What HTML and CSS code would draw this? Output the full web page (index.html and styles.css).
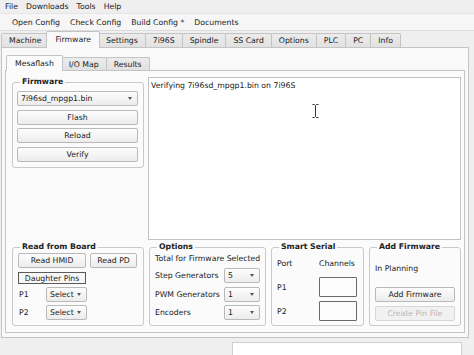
FILE: index.html
```html
<!DOCTYPE html>
<html>
<head>
    <meta charset="utf-8">
    <title>Mesa Configuration Tool</title>
    <link rel="stylesheet" href="styles.css">
</head>
<body>

<div class="menubar">
    <span>File</span><span>Downloads</span><span>Tools</span><span>Help</span>
</div>

<div class="toolbar">
    <span>Open Config</span><span>Check Config</span><span>Build Config *</span><span>Documents</span>
</div>

<div class="tabbar">
    <span class="tab">Machine</span>
    <span class="tab active">Firmware</span>
    <span class="tab">Settings</span>
    <span class="tab">7i96S</span>
    <span class="tab">Spindle</span>
    <span class="tab">SS Card</span>
    <span class="tab">Options</span>
    <span class="tab">PLC</span>
    <span class="tab">PC</span>
    <span class="tab">Info</span>
</div>

<div class="pane">
    <div class="subtabs">
        <span class="tab active">Mesaflash</span>
        <span class="tab">I/O Map</span>
        <span class="tab">Results</span>
    </div>

    <div class="subpane">
        <div class="top-row">
            <fieldset class="group fw-group">
                <legend>Firmware</legend>
                <div class="group-body">
                    <div class="combo">7i96sd_mpgp1.bin</div>
                    <button class="btn">Flash</button>
                    <button class="btn">Reload</button>
                    <button class="btn">Verify</button>
                </div>
            </fieldset>
            <div class="output">
                Verifying 7i96sd_mpgp1.bin on 7i96S
                <svg class="ibeam" width="7" height="14" viewBox="0 0 7 14">
                    <path d="M0.5 0.5h2l1 1l1-1h2M3.5 1.5v11M0.5 13.5h2l1-1l1 1h2" fill="none" stroke="#333" stroke-width="1"/>
                </svg>
            </div>
        </div>

        <div class="bottom-row">
            <fieldset class="group board-group">
                <legend>Read from Board</legend>
                <div class="board-body">
                    <div class="btn-row">
                        <button class="btn hmid">Read HMID</button>
                        <button class="btn pd">Read PD</button>
                    </div>
                    <div class="pins-btn">Daughter Pins</div>
                    <div class="port-row"><span class="port-label">P1</span><div class="combo small">Select</div></div>
                    <div class="port-row"><span class="port-label">P2</span><div class="combo small">Select</div></div>
                </div>
            </fieldset>

            <fieldset class="group options-group">
                <legend>Options</legend>
                <div class="options-body">
                    <div class="total">Total for Firmware Selected</div>
                    <div class="opt-row"><span>Step Generators</span><div class="combo num">5</div></div>
                    <div class="opt-row"><span>PWM Generators</span><div class="combo num">1</div></div>
                    <div class="opt-row"><span>Encoders</span><div class="combo num">1</div></div>
                </div>
            </fieldset>

            <fieldset class="group serial-group">
                <legend>Smart Serial</legend>
                <div class="serial-head"><span class="serial-label">Port</span><span>Channels</span></div>
                <div class="serial-row"><span class="serial-label">P1</span><div class="channel-box"></div></div>
                <div class="serial-row"><span class="serial-label">P2</span><div class="channel-box"></div></div>
            </fieldset>

            <fieldset class="group add-group">
                <legend>Add Firmware</legend>
                <div class="add-body">
                    <div class="planning">In Planning</div>
                    <button class="btn">Add Firmware</button>
                    <button class="btn disabled">Create Pin File</button>
                </div>
            </fieldset>
        </div>
    </div>
</div>

<div class="statusbar">
    <div class="status-box"></div>
</div>

</body>
</html>
```

FILE: styles.css
```css
body {
    margin: 0;
    width: 474px;
    height: 355px;
    overflow: hidden;
    background-color: #efefef;
    font-family: "DejaVu Sans", sans-serif;
    font-size: 7.75px;
    color: #222;
    display: flex;
    flex-direction: column;
}

.menubar {
    height: 13px;
    display: flex;
    align-items: center;
    padding-left: 1px;
}

.menubar span {
    padding: 0 4px;
}

.toolbar {
    height: 16px;
    display: flex;
    align-items: center;
    padding-left: 7px;
    background-color: #f6f6f6;
    border-top: 1px solid #e6e6e6;
    border-bottom: 1px solid #dcdcdc;
}

.toolbar span {
    padding: 0 5px;
}

/* tab bars */
.tabbar,
.subtabs {
    display: flex;
    align-items: flex-end;
    position: relative;
    z-index: 1;
}

.tabbar {
    height: 16px;
    margin: 0 5px 0 1px;
}

.subtabs {
    height: 15px;
    padding-left: 3px;
}

.tab {
    height: 14px;
    box-sizing: border-box;
    padding: 0 7px;
    margin-right: -1px;
    display: flex;
    align-items: center;
    border: 1px solid #c4c4c4;
    border-bottom: none;
    border-radius: 2px 2px 0 0;
    background: linear-gradient(#ececec, #e1e1e1);
    white-space: nowrap;
}

.subtabs .tab {
    height: 13px;
}

.tab.active {
    height: 17px;
    margin: 0 -2px -1px;
    padding: 0 8px 1px;
    background: #f9f9f9;
    position: relative;
    z-index: 2;
}

.subtabs .tab.active {
    height: 16px;
    background: #fbfbfb;
}

.pane {
    flex: 1;
    margin: 0 5px 0 1px;
    border: 1px solid #c4c4c4;
    background-color: #f9f9f9;
    padding: 7px 3px 4px 3px;
    display: flex;
    flex-direction: column;
    min-height: 0;
}

.subpane {
    flex: 1;
    border: 1px solid #c4c4c4;
    background-color: #fbfbfb;
    padding: 6px 3px 6px 6px;
    display: flex;
    flex-direction: column;
    gap: 2px;
}

.top-row {
    display: flex;
    gap: 4px;
    height: 163px;
    align-items: flex-start;
}

.output {
    flex: 1;
    height: 163px;
    box-sizing: border-box;
    background-color: #fff;
    border: 1px solid #c2c2c2;
    padding: 3px 2px;
    line-height: 10px;
    position: relative;
}

.ibeam {
    position: absolute;
    left: 163px;
    top: 26px;
}

.bottom-row {
    display: flex;
    gap: 5px;
    height: 84px;
}

/* group boxes */
.group {
    margin: 0;
    min-width: 0;
    box-sizing: border-box;
    border: 1px solid #c9c9c9;
    border-radius: 3px;
    padding: 0 5px 5px 4px;
}

.group legend {
    font-weight: bold;
    padding: 0 2px;
    margin-left: 2px;
    line-height: 10px;
}

.fw-group {
    width: 132px;
    flex: none;
    padding-top: 4px;
}

.fw-group legend {
    margin-left: 3px;
}

.group-body {
    display: flex;
    flex-direction: column;
    gap: 3.5px;
}

.btn,
.combo {
    height: 15px;
    box-sizing: border-box;
    border: 1px solid #b9b9b9;
    border-radius: 2px;
    background: linear-gradient(#fdfdfd, #ececec);
    font-family: inherit;
    font-size: inherit;
    color: inherit;
    padding: 0;
}

.combo {
    display: flex;
    align-items: center;
    padding: 0 5px 0 3px;
}

.combo::after {
    content: "";
    margin-left: auto;
    border-left: 2px solid transparent;
    border-right: 2px solid transparent;
    border-top: 3px solid #555;
}

.btn.disabled {
    color: #b8b8b8;
    border-color: #d6d6d6;
    background: #f1f1f1;
}

.board-group {
    width: 132px;
    flex: none;
    padding-left: 5px;
    padding-top: 1px;
}

.btn-row {
    display: flex;
    gap: 4px;
}

.hmid {
    width: 68px;
}

.pd {
    width: 47px;
}

.pins-btn {
    width: 68px;
    height: 12px;
    box-sizing: border-box;
    margin-top: 4px;
    border: 1px solid #5a5a5a;
    background-color: #f6f6f6;
    display: flex;
    align-items: center;
    justify-content: center;
}

.port-row {
    display: flex;
    align-items: center;
    margin-top: 3px;
}

.port-label {
    width: 27px;
    padding-left: 1px;
}

.combo.small {
    width: 41px;
}

.options-group {
    width: 117px;
    flex: none;
    padding-top: 2px;
    padding-left: 5px;
}

.total {
    line-height: 10px;
    white-space: nowrap;
    margin-bottom: 4px;
}

.opt-row {
    display: flex;
    align-items: center;
    justify-content: space-between;
    margin-bottom: 3.5px;
    white-space: nowrap;
}

.combo.num {
    width: 36px;
}

.serial-group {
    width: 93px;
    flex: none;
    padding-top: 6px;
    padding-left: 5px;
}

.serial-head,
.serial-row {
    display: flex;
    align-items: center;
}

.serial-head {
    height: 10px;
}

.serial-row {
    height: 20px;
    margin-top: 4px;
}

.serial-head + .serial-row {
    margin-top: 9px;
}

.serial-label {
    width: 42px;
}

.channel-box {
    width: 38px;
    height: 20px;
    box-sizing: border-box;
    border: 1px solid #6a6a6a;
    border-radius: 1px;
    background-color: #fcfcfc;
}

.add-group {
    flex: 1;
    padding-top: 12px;
    padding-left: 5px;
}

.add-body {
    display: flex;
    flex-direction: column;
}

.planning {
    line-height: 10px;
    margin-bottom: 13px;
}

.add-body .btn + .btn {
    margin-top: 4px;
}

.statusbar {
    height: 17px;
    flex: none;
}

.status-box {
    margin: 4px 0 0 232px;
    width: 230px;
    height: 13px;
    box-sizing: border-box;
    border: 1px solid #d0d0d0;
    border-bottom: none;
    background-color: #fff;
}
```
